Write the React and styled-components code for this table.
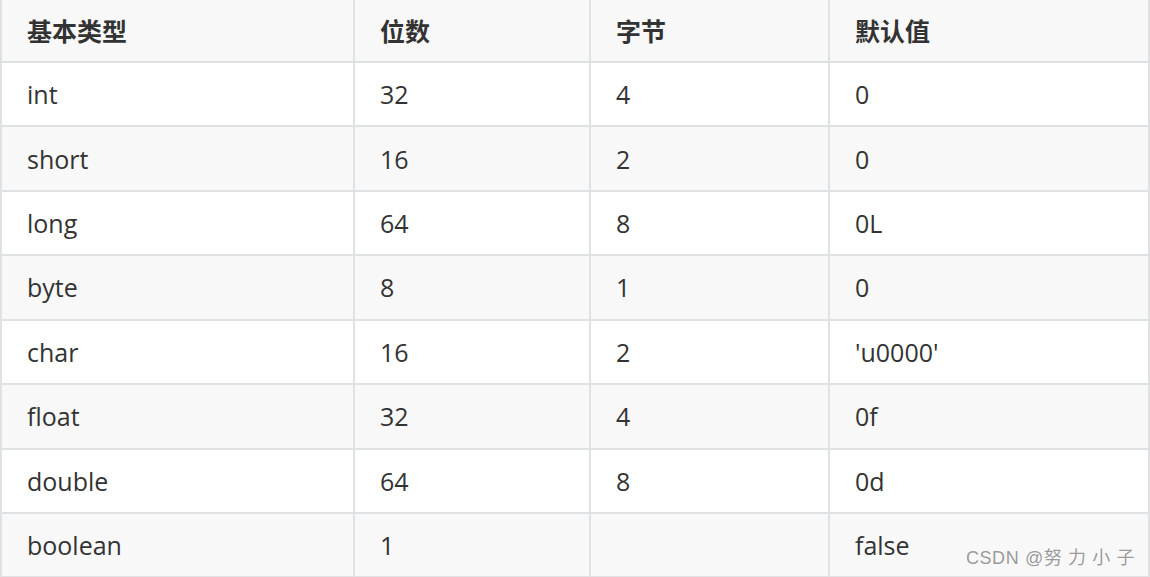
import styled, { createGlobalStyle } from 'styled-components';

const columns = ['基本类型', '位数', '字节', '默认值'];

const rows = [
  ['int', '32', '4', '0'],
  ['short', '16', '2', '0'],
  ['long', '64', '8', '0L'],
  ['byte', '8', '1', '0'],
  ['char', '16', '2', "'u0000'"],
  ['float', '32', '4', '0f'],
  ['double', '64', '8', '0d'],
  ['boolean', '1', '', 'false'],
];

const widths = [355, 236, 239, 320];

function App() {
  return (
    <>
      <GlobalStyle />
      <Page>
        <Table>
          <thead>
            <tr>
              {columns.map((name, i) => (
                <HeadCell key={name} $width={widths[i]} $first={i === 0}>
                  {name}
                </HeadCell>
              ))}
            </tr>
          </thead>
          <tbody>
            {rows.map((row, r) => (
              <Row key={row[0]} $striped={r % 2 === 1}>
                {row.map((value, i) => (
                  <Cell key={i} $first={i === 0}>
                    {value}
                  </Cell>
                ))}
              </Row>
            ))}
          </tbody>
        </Table>
        <Watermark>CSDN @努 力 小 子</Watermark>
      </Page>
    </>
  );
}

const GlobalStyle = createGlobalStyle`
  html, body {
    margin: 0;
    padding: 0;
    background: #ffffff;
    overflow: hidden;
  }
`;

const Page = styled.div`
  position: relative;
  width: 1150px;
  height: 577px;
  overflow: hidden;
  font-family: 'Open Sans', 'Noto Sans', 'Noto Sans CJK SC', sans-serif;
  color: #333333;
`;

const Table = styled.table`
  width: 1150px;
  table-layout: fixed;
  border-collapse: separate;
  border-spacing: 0;
  font-size: 25px;
`;

const HeadCell = styled.th`
  box-sizing: border-box;
  width: ${(p) => p.$width}px;
  height: 63px;
  padding: 0 0 2px 25px;
  text-align: left;
  font-weight: 700;
  font-family: 'Open Sans', 'Noto Sans CJK SC', sans-serif;
  background: #f8f8f8;
  border-right: 2px solid #dfe2e5;
  border-bottom: 2px solid #dfe2e5;
  border-left: ${(p) => (p.$first ? '2px solid #dfe2e5' : 'none')};
  vertical-align: middle;
`;

const Row = styled.tr`
  background: ${(p) => (p.$striped ? '#f8f8f8' : '#ffffff')};
`;

const Cell = styled.td`
  box-sizing: border-box;
  height: 64.43px;
  padding: 0 0 0 25px;
  border-right: 2px solid #dfe2e5;
  border-bottom: 2px solid #dfe2e5;
  border-left: ${(p) => (p.$first ? '2px solid #dfe2e5' : 'none')};
  vertical-align: middle;
  white-space: nowrap;
`;

const Watermark = styled.div`
  position: absolute;
  right: 15px;
  bottom: 8px;
  font-family: 'Liberation Sans', 'Noto Sans CJK SC', sans-serif;
  font-size: 18px;
  color: #9a9a9a;
  text-shadow: 0 0 1px #ffffff;
  letter-spacing: 0.6px;
`;

export default App;
